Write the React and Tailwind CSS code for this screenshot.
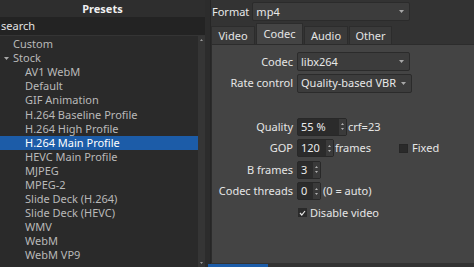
import React from "react";

const items = [
  "AV1 WebM",
  "Default",
  "GIF Animation",
  "H.264 Baseline Profile",
  "H.264 High Profile",
  "H.264 Main Profile",
  "HEVC Main Profile",
  "MJPEG",
  "MPEG-2",
  "Slide Deck (H.264)",
  "Slide Deck (HEVC)",
  "WMV",
  "WebM",
  "WebM VP9",
];

function Arrow() {
  return (
    <svg width="5" height="3" viewBox="0 0 5 3" className="shrink-0">
      <path d="M0 0 L5 0 L2.5 3 Z" fill="#a8a8a8" />
    </svg>
  );
}

function Combo({ value, w }) {
  return (
    <div
      className={`${w} h-[19px] flex items-center justify-between pl-[3px] pr-[5px] bg-[#3c3c3c] border border-[#2b2b2b] rounded-[2px] text-[#e8e8e8]`}
    >
      <span>{value}</span>
      <Arrow />
    </div>
  );
}

function Spin({ value, w }) {
  return (
    <div className={`${w} h-[18px] flex bg-[#2b2b2b] border border-[#282828] rounded-[2px]`}>
      <div className="flex-1 flex items-center pl-[3px] text-[#ececec]">{value}</div>
      <div className="w-[7px] flex flex-col items-center justify-center gap-[3px] bg-[#3a3a3a]">
        <svg width="3" height="2" viewBox="0 0 3 2">
          <path d="M0 2 L1.5 0 L3 2 Z" fill="#b0b0b0" />
        </svg>
        <svg width="3" height="2" viewBox="0 0 3 2">
          <path d="M0 0 L3 0 L1.5 2 Z" fill="#b0b0b0" />
        </svg>
      </div>
    </div>
  );
}

function Row({ label, children, h = "h-[18.5px]" }) {
  return (
    <div className={`flex items-center ${h}`}>
      <div className="w-[81px] text-right text-[#e6e6e6] pr-0">{label}</div>
      <div className="ml-[4px] flex items-center">{children}</div>
    </div>
  );
}

export default function App() {
  return (
    <div
      className="w-[474px] h-[267px] flex overflow-hidden bg-[#303030] text-[11px] leading-[14px]"
      style={{ fontFamily: '"Noto Sans", "DejaVu Sans", sans-serif' }}
    >
      {/* Left presets panel */}
      <div className="w-[205px] shrink-0 flex flex-col bg-[#2a2a2a]">
        <div className="h-[17px] flex items-center justify-center font-bold text-[#f0f0f0] bg-[#2e2e2e]">
          Presets
        </div>
        <div className="h-[19px] flex items-center pl-px bg-[#232323] border-b border-[#343434] text-[#e4e4e4]">
          search
        </div>
        <div className="flex-1 flex min-h-0">
          <div className="flex-1 flex flex-col pt-px overflow-hidden">
            <div className="h-[14.1px] shrink-0 flex items-center pl-[13px] text-[#b9b9b9]">Custom</div>
            <div className="h-[14.1px] shrink-0 flex items-center pl-[4px] text-[#b9b9b9]">
              <Arrow />
              <span className="ml-[4px]">Stock</span>
            </div>
            {items.map((it) => {
              const sel = it === "H.264 Main Profile";
              return (
                <div
                  key={it}
                  className={`h-[14.1px] shrink-0 flex items-center pl-[25px] ${
                    sel ? "bg-[#1c5ca8] text-white" : "text-[#b9b9b9]"
                  }`}
                >
                  {it}
                </div>
              );
            })}
          </div>
          <div className="w-[7px] shrink-0 flex flex-col justify-between items-center bg-[#353535] py-[3px]">
            <svg width="3" height="2" viewBox="0 0 3 2">
              <path d="M0 2 L1.5 0 L3 2 Z" fill="#9a9a9a" />
            </svg>
            <svg width="3" height="2" viewBox="0 0 3 2">
              <path d="M0 0 L3 0 L1.5 2 Z" fill="#9a9a9a" />
            </svg>
          </div>
        </div>
      </div>

      {/* Divider */}
      <div className="w-[6px] shrink-0 bg-[#2c2c2c] border-r border-[#262626]" />

      {/* Right side */}
      <div className="flex-1 flex flex-col bg-[#333333]">
        <div className="h-[22px] flex items-center pt-px">
          <span className="text-[#e8e8e8] ml-px">Format</span>
          <div className="ml-[3px]">
            <Combo value="mp4" w="w-[158px]" />
          </div>
        </div>
        <div className="h-[22px] flex items-end gap-px text-[#e4e4e4]">
          <div className="w-[44px] h-[18px] flex items-center justify-center bg-[#3a3a3a] border border-b-0 border-[#2c2c2c]">
            Video
          </div>
          <div className="w-[47px] h-[21px] flex items-center justify-center bg-[#444444] border border-b-0 border-[#2c2c2c]">
            Codec
          </div>
          <div className="w-[44px] h-[18px] flex items-center justify-center bg-[#3a3a3a] border border-b-0 border-[#2c2c2c]">
            Audio
          </div>
          <div className="w-[43px] h-[18px] flex items-center justify-center bg-[#3a3a3a] border border-b-0 border-[#2c2c2c]">
            Other
          </div>
        </div>
        <div className="h-[219px] bg-[#444444] border-t border-l border-[#2c2c2c] flex flex-col pt-[7px]">
          <div className="flex flex-col gap-[2.5px]">
            <Row label="Codec" h="h-[19px]">
              <Combo value="libx264" w="w-[113px]" />
            </Row>
            <Row label="Rate control" h="h-[19px]">
              <Combo value="Quality-based VBR" w="w-[115px]" />
            </Row>
          </div>
          <div className="flex flex-col gap-[3px] mt-[25px]">
            <Row label="Quality">
              <Spin value="55 %" w="w-[50px]" />
              <span className="ml-px text-[#e6e6e6]">crf=23</span>
            </Row>
            <Row label="GOP">
              <Spin value="120" w="w-[37px]" />
              <span className="ml-px text-[#e6e6e6]">frames</span>
              <div className="ml-[28px] w-[9px] h-[9px] bg-[#2a2a2a] border border-[#262626]" />
              <span className="ml-[4px] text-[#e6e6e6]">Fixed</span>
            </Row>
            <Row label="B frames">
              <Spin value="3" w="w-[24px]" />
            </Row>
            <Row label="Codec threads">
              <Spin value="0" w="w-[24px]" />
              <span className="ml-[2px] text-[#e6e6e6]">(0 = auto)</span>
            </Row>
            <Row label="">
              <div className="ml-px w-[9px] h-[9px] flex items-center justify-center bg-[#2a2a2a]">
                <svg width="7" height="6" viewBox="0 0 7 6">
                  <path d="M1 3 L2.8 5 L6 1" stroke="#e6e6e6" strokeWidth="1.2" fill="none" />
                </svg>
              </div>
              <span className="ml-[3px] text-[#e6e6e6]">Disable video</span>
            </Row>
          </div>
        </div>
        <div className="flex-1 flex items-end">
          <div className="-ml-[3px] w-[60px] h-[3px] bg-[#1c5ca8]" />
        </div>
      </div>
    </div>
  );
}
